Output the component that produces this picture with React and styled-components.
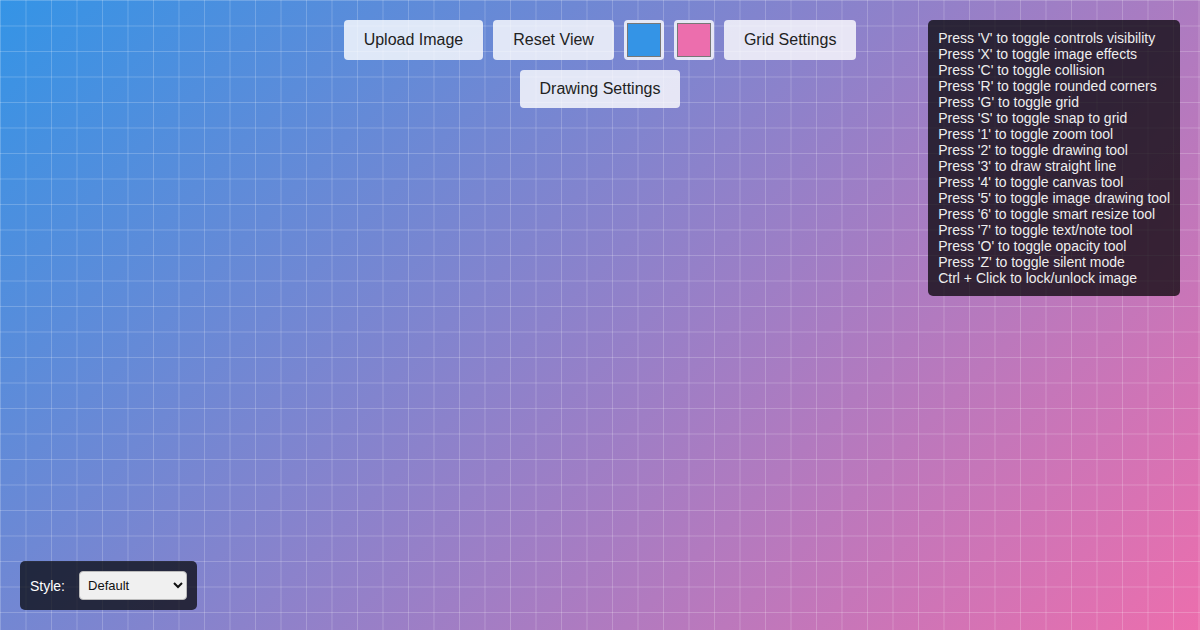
import React, { useState } from 'react';
import styled, { createGlobalStyle } from 'styled-components';

const GlobalStyle = createGlobalStyle`
  html, body, #root {
    margin: 0;
    padding: 0;
    width: 100%;
    height: 100%;
  }
  body {
    font-family: "Liberation Sans", Arial, sans-serif;
    overflow: hidden;
  }
`;

const Canvas = styled.div`
  position: relative;
  width: 100vw;
  height: 100vh;
  overflow: hidden;
  background:
    linear-gradient(rgba(255, 255, 255, 0.2) 1px, transparent 1px),
    linear-gradient(90deg, rgba(255, 255, 255, 0.2) 1px, transparent 1px),
    linear-gradient(135deg, #3494e6, #ec6ead);
  background-size: 25.5px 25.5px, 25.5px 25.5px, 100% 100%;
`;

const Toolbar = styled.div`
  display: flex;
  flex-wrap: wrap;
  justify-content: center;
  gap: 10px;
  width: 600px;
  margin: 0 auto;
  padding-top: 20px;
`;

const ToolButton = styled.button`
  font-family: "Liberation Sans", Arial, sans-serif;
  font-size: 16px;
  color: #222;
  background: rgba(255, 255, 255, 0.8);
  border: none;
  border-radius: 4px;
  padding: 10px 20px;
  cursor: pointer;
`;

const Swatch = styled.div`
  width: 40px;
  height: 40px;
  box-sizing: border-box;
  padding: 3px;
  background: rgba(255, 255, 255, 0.8);
  border-radius: 4px;
`;

const SwatchColor = styled.div`
  width: 100%;
  height: 100%;
  box-sizing: border-box;
  border: 1px solid #777;
  background: ${p => p.$color};
`;

const HelpPanel = styled.div`
  position: absolute;
  top: 20px;
  right: 20px;
  padding: 10px;
  background: rgba(0, 0, 0, 0.72);
  border-radius: 5px;
  color: #eee;
  font-size: 14px;
  line-height: 16px;
  white-space: nowrap;
`;

const StylePanel = styled.div`
  position: absolute;
  left: 20px;
  bottom: 20px;
  display: flex;
  align-items: center;
  gap: 14px;
  padding: 10px;
  background: rgba(0, 0, 0, 0.7);
  border-radius: 5px;
  color: #fff;
  font-size: 14px;
`;

const StyleSelect = styled.select`
  width: 108px;
  height: 29px;
  font-family: "Liberation Sans", Arial, sans-serif;
  font-size: 13px;
  color: #111;
  background: #f0f0f0;
  border: 1px solid #bbb;
  border-radius: 4px;
  padding: 0 4px;
`;

const shortcuts = [
  "Press 'V' to toggle controls visibility",
  "Press 'X' to toggle image effects",
  "Press 'C' to toggle collision",
  "Press 'R' to toggle rounded corners",
  "Press 'G' to toggle grid",
  "Press 'S' to toggle snap to grid",
  "Press '1' to toggle zoom tool",
  "Press '2' to toggle drawing tool",
  "Press '3' to draw straight line",
  "Press '4' to toggle canvas tool",
  "Press '5' to toggle image drawing tool",
  "Press '6' to toggle smart resize tool",
  "Press '7' to toggle text/note tool",
  "Press 'O' to toggle opacity tool",
  "Press 'Z' to toggle silent mode",
  'Ctrl + Click to lock/unlock image',
];

export default function App() {
  const [style, setStyle] = useState('default');

  return (
    <>
      <GlobalStyle />
      <Canvas>
        <Toolbar>
          <ToolButton>Upload Image</ToolButton>
          <ToolButton>Reset View</ToolButton>
          <Swatch><SwatchColor $color="#3494e6" /></Swatch>
          <Swatch><SwatchColor $color="#ec6ead" /></Swatch>
          <ToolButton>Grid Settings</ToolButton>
          <ToolButton>Drawing Settings</ToolButton>
        </Toolbar>

        <HelpPanel>
          {shortcuts.map(line => (
            <div key={line}>{line}</div>
          ))}
        </HelpPanel>

        <StylePanel>
          <span>Style:</span>
          <StyleSelect value={style} onChange={e => setStyle(e.target.value)}>
            <option value="default">Default</option>
            <option value="polaroid">Polaroid</option>
            <option value="shadow">Shadow</option>
          </StyleSelect>
        </StylePanel>
      </Canvas>
    </>
  );
}
